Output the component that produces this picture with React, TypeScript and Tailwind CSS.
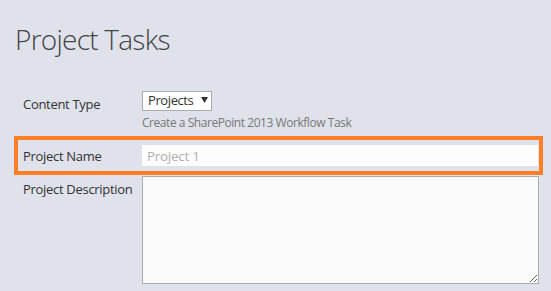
export default function App() {
  return (
    <div className="w-[551px] h-[291px] bg-[#dfe2ea] overflow-hidden font-['Open_Sans','Noto_Sans',sans-serif] text-[#444]">
      <h1 className="pl-[15px] pt-[21px] text-[28px] leading-[36px] font-light text-[#444] tracking-[-0.75px]">
        Project Tasks
      </h1>

      <div className="mt-[34px] flex">
        <div className="w-[142px] pl-[23px] pt-[4px] text-[13px] leading-[18px] tracking-[-0.3px] text-[#333] whitespace-nowrap">Content Type</div>
        <div className="flex flex-col">
          <div className="w-[70px] h-[20px] border border-[#ababab] bg-white flex items-center pl-[5px] text-[13px] tracking-[-0.4px] text-[#333]">
            Projects
            <svg className="ml-[8px] mb-[2px]" width="7" height="6" viewBox="0 0 7 6">
              <path d="M0 0H7L3.5 6Z" fill="#333" />
            </svg>
          </div>
          <div className="mt-[4px] text-[12px] leading-[16px] tracking-[-0.45px] text-[#777]">Create a SharePoint 2013 Workflow Task</div>
        </div>
      </div>

      <div className="mt-[5px] ml-[14px] w-[529px] border-4 border-[#fd7f27] flex pt-[5px] pb-[5px] pr-[1px]">
        <div className="w-[124px] pl-[5px] pt-[2px] text-[13px] leading-[18px] tracking-[-0.3px] text-[#333] whitespace-nowrap">Project Name</div>
        <input
          className="w-[396px] h-[21px] bg-[#fdfdfd] border-0 outline-none px-[5px] text-[13.5px] tracking-[-0.3px] placeholder:text-[#b0b0b0]"
          placeholder="Project 1"
        />
      </div>

      <div className="mt-[4px] flex">
        <div className="w-[142px] pl-[23px] pt-[1px] text-[13px] leading-[18px] tracking-[-0.3px] text-[#333] whitespace-nowrap">Project Description</div>
        <textarea className="w-[397px] h-[108px] -mt-[3px] bg-[#fafafa] border border-[#ababab] outline-none resize" />
      </div>
    </div>
  );
}
